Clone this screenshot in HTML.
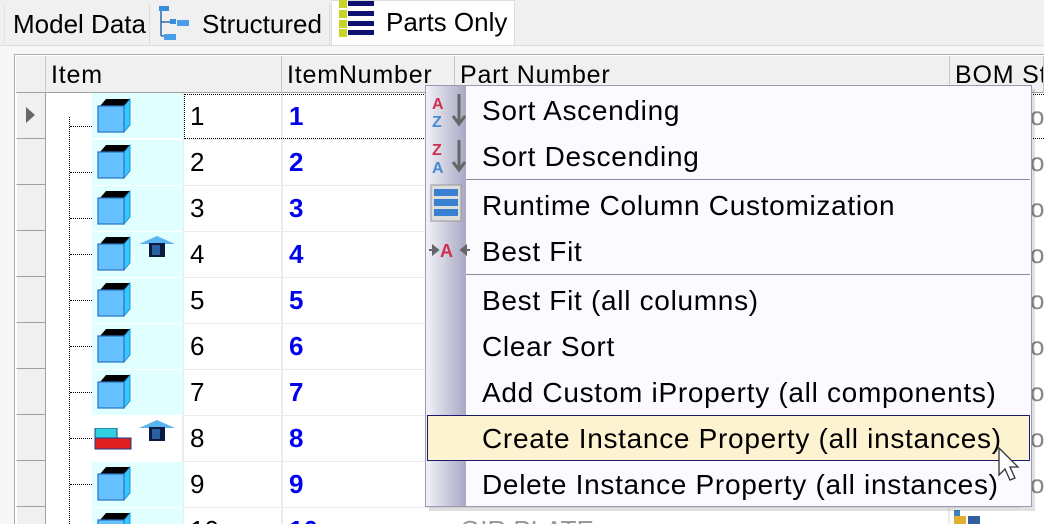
<!DOCTYPE html>
<html><head><meta charset="utf-8"><style>
*{margin:0;padding:0;box-sizing:border-box}
html{width:1044px;height:524px;overflow:hidden}
body{width:1044px;height:524px;overflow:hidden;background:#f0f0f0;font-family:"Liberation Sans","DejaVu Sans",sans-serif;position:relative}
.a{position:absolute}
.tab{position:absolute;top:4px;height:41px;font-size:26px;line-height:41px;color:#000;border-right:1px solid #ddd;white-space:nowrap}
.hdr{position:absolute;top:56px;height:37px;background:#f0f0f0;border-right:1px solid #c8c8c8;border-bottom:1px solid #a0a0a0;font-size:25px;letter-spacing:.8px;line-height:38px;padding-left:5px;color:#000;white-space:nowrap;overflow:hidden}
.rs{position:absolute;left:16px;width:30px;height:46px;background:#f0f0f0;border-right:1px solid #a0a0a0;border-bottom:1px solid #a0a0a0;border-left:1px solid #fff}
.cy{position:absolute;left:92px;width:91px;height:45px;background:#e0ffff}
.n{position:absolute;left:190px;font-size:26px;line-height:46px;height:46px}
.b{position:absolute;left:289px;font-size:26px;font-weight:bold;color:#0000ee;line-height:46px;height:46px}
.hl{position:absolute;left:184px;width:836px;height:1px;background:#ececec}
.vl{position:absolute;width:2px;background:#ececec}
.dt{position:absolute;left:70px;width:22px;border-top:1px dotted #000}
.cube{position:absolute;left:96px;width:36px;height:36px}
.mi{position:absolute;left:482px;font-size:28px;letter-spacing:.7px;line-height:46px;height:45px;color:#000;white-space:nowrap}
.sep{position:absolute;left:466px;width:564px;height:1px;background:#8a8aa0}
.nor{position:absolute;left:1030px;font-size:26px;line-height:46px;height:46px;color:#888}
</style></head><body>
<div class="a" style="left:0;top:45px;width:1044px;height:479px;background:#f7f7f7;border-top:1px solid #ddd"></div>
<div class="tab" style="left:4px;width:146px;padding-left:8px;background:#f0f0f0;border-left:1px solid #e4e4e4">Model Data</div>
<div class="tab" style="left:150px;width:180px;padding-left:52px;background:#f0f0f0">Structured</div>
<svg class="a" style="left:157px;top:6px" width="40" height="34"><rect x="2" y="0" width="10" height="5" fill="#3a8ed8"/><path d="M4 5V30M4 16H14M4 30H8" stroke="#2a6aa8" stroke-width="1.5" fill="none"/><rect x="13" y="13" width="6" height="5" fill="#3a8ed8"/><rect x="20" y="14" width="12" height="6" fill="#4a9ee8"/><rect x="7" y="28" width="12" height="6" fill="#4a9ee8"/></svg>
<div class="tab" style="left:331px;top:0;height:45px;line-height:42px;width:184px;padding-left:54px;background:#fff;border:1px solid #ddd;border-bottom:none">Parts Only</div>
<svg class="a" style="left:338px;top:0" width="42" height="38"><g fill="#c8d428"><rect x="1" y="0" width="8" height="8"/><rect x="1" y="10" width="8" height="8"/><rect x="1" y="20" width="8" height="8"/><rect x="1" y="29" width="8" height="8"/></g><g fill="#101070"><rect x="10" y="1" width="26" height="5"/><rect x="10" y="11" width="26" height="5"/><rect x="10" y="21" width="26" height="5"/><rect x="10" y="30" width="26" height="5"/></g></svg>
<div class="a" style="left:14px;top:54px;width:1030px;height:470px;background:#fff;border:1px solid #aaa;border-right:none;border-bottom:none"></div>
<div class="hdr" style="left:16px;width:30px;padding:0"></div>
<div class="hdr" style="left:46px;width:236px">Item</div>
<div class="hdr" style="left:282px;width:173px">ItemNumber</div>
<div class="hdr" style="left:455px;width:495px">Part Number</div>
<div class="hdr" style="left:950px;width:94px">BOM Str</div>
<div class="a" style="left:69px;top:117px;height:407px;border-left:1px dotted #000"></div>
<div class="rs" style="top:93px"></div><div class="a" style="left:26px;top:107px;border-left:9px solid #666;border-top:8px solid transparent;border-bottom:8px solid transparent"></div>
<div class="rs" style="top:139px"></div><div class="rs" style="top:185px"></div><div class="rs" style="top:231px"></div><div class="rs" style="top:277px"></div><div class="rs" style="top:323px"></div><div class="rs" style="top:369px"></div><div class="rs" style="top:415px"></div><div class="rs" style="top:461px"></div><div class="rs" style="top:507px;height:17px;border-bottom:none"></div>
<div class="vl" style="left:182px;top:93px;height:431px"></div><div class="vl" style="left:281px;top:93px;height:431px"></div><div class="vl" style="left:948px;top:93px;height:431px"></div>
<div class="hl" style="top:139px"></div><div class="hl" style="top:185px"></div><div class="hl" style="top:231px"></div><div class="hl" style="top:277px"></div><div class="hl" style="top:323px"></div><div class="hl" style="top:369px"></div><div class="hl" style="top:415px"></div><div class="hl" style="top:461px"></div><div class="hl" style="top:507px"></div>
<div class="a" style="left:184px;top:94px;width:860px;height:45px;border:1px dotted #000;border-right:none"></div>
<div class="cy" style="top:93px"></div><div class="cy" style="top:140px"></div><div class="cy" style="top:186px"></div><div class="cy" style="top:232px"></div><div class="cy" style="top:278px"></div><div class="cy" style="top:324px"></div><div class="cy" style="top:370px"></div><div class="cy" style="top:462px"></div><div class="cy" style="top:508px;height:16px"></div>
<svg width="0" height="0" style="position:absolute"><defs><g id="c"><path d="M4 9L10 2H34L28 9Z" fill="#000"/><path d="M28 9L34 2V28L28 35Z" fill="#33c8ff" stroke="#2080c0" stroke-width=".8"/><rect x="2" y="9" width="26" height="26" fill="#66c2ff" stroke="#2a70c8" stroke-width="1.2"/></g><g id="h"><path d="M2 12L20 4L38 12Z" fill="#5ab4f0"/><rect x="12" y="11" width="16" height="14" fill="#0a1a40"/><rect x="15" y="13" width="8" height="10" fill="#2a60a0"/></g></defs></svg>
<svg class="cube" style="top:97px"><use href="#c"/></svg>
<svg class="cube" style="top:143px"><use href="#c"/></svg>
<svg class="cube" style="top:189px"><use href="#c"/></svg>
<svg class="cube" style="top:235px"><use href="#c"/></svg>
<svg class="cube" style="top:281px"><use href="#c"/></svg>
<svg class="cube" style="top:327px"><use href="#c"/></svg>
<svg class="cube" style="top:373px"><use href="#c"/></svg>
<svg class="cube" style="top:465px"><use href="#c"/></svg>
<svg class="cube" style="top:511px;height:13px"><use href="#c"/></svg>
<svg class="a" style="left:137px;top:232px" width="40" height="28"><use href="#h"/></svg>
<svg class="a" style="left:137px;top:416px" width="40" height="28"><use href="#h"/></svg>
<svg class="a" style="left:94px;top:428px" width="38" height="24"><rect x="1" y="0" width="22" height="10" fill="#30d0e0" stroke="#1a4a80"/><rect x="1" y="10" width="36" height="11" fill="#e02020" stroke="#1a3a80"/></svg>
<div class="dt" style="top:126px"></div><div class="dt" style="top:172px"></div><div class="dt" style="top:218px"></div><div class="dt" style="top:254px"></div><div class="dt" style="top:300px"></div><div class="dt" style="top:346px"></div><div class="dt" style="top:392px"></div><div class="dt" style="top:438px"></div><div class="dt" style="top:484px"></div>
<div class="n" style="top:93px">1</div><div class="n" style="top:139px">2</div><div class="n" style="top:185px">3</div><div class="n" style="top:231px">4</div><div class="n" style="top:277px">5</div><div class="n" style="top:323px">6</div><div class="n" style="top:369px">7</div><div class="n" style="top:415px">8</div><div class="n" style="top:461px">9</div><div class="n" style="top:507px;height:17px;overflow:hidden">10</div>
<div class="b" style="top:93px">1</div><div class="b" style="top:139px">2</div><div class="b" style="top:185px">3</div><div class="b" style="top:231px">4</div><div class="b" style="top:277px">5</div><div class="b" style="top:323px">6</div><div class="b" style="top:369px">7</div><div class="b" style="top:415px">8</div><div class="b" style="top:461px">9</div><div class="b" style="top:507px;height:17px;overflow:hidden">10</div>
<div class="a" style="left:460px;top:507px;font-size:26px;line-height:46px;height:17px;overflow:hidden;color:#999">GIR PLATE</div>
<div class="nor" style="top:93px">or</div><div class="nor" style="top:139px">or</div><div class="nor" style="top:185px">or</div><div class="nor" style="top:231px">or</div><div class="nor" style="top:277px">or</div><div class="nor" style="top:323px">or</div><div class="nor" style="top:369px">or</div><div class="nor" style="top:415px">or</div><div class="nor" style="top:461px;height:46px;max-height:46px">or</div>
<svg class="a" style="left:952px;top:510px" width="40" height="14"><rect x="2" y="0" width="6" height="6" fill="#4080c0"/><rect x="2" y="6" width="12" height="8" fill="#e0b030"/><rect x="16" y="6" width="12" height="8" fill="#3060a0"/></svg>
<div class="a" style="left:429px;top:89px;width:606px;height:422px;background:rgba(0,0,0,.12)"></div>
<div class="a" style="left:425px;top:85px;width:607px;height:422px;background:#fbfaff;border:1px solid #9a9ab0"></div>
<div class="a" style="left:426px;top:86px;width:40px;height:420px;background:linear-gradient(90deg,#f2f2f8,#a8a8c4)"></div>
<div class="sep" style="top:179px"></div><div class="sep" style="top:274px"></div>
<div class="a" style="left:427px;top:415px;width:603px;height:46px;background:#fdf3d0;border:1px solid #1a1a70"></div>
<div class="mi" style="top:88px">Sort Ascending</div>
<div class="mi" style="top:134px">Sort Descending</div>
<div class="mi" style="top:183px">Runtime Column Customization</div>
<div class="mi" style="top:229px">Best Fit</div>
<div class="mi" style="top:278px">Best Fit (all columns)</div>
<div class="mi" style="top:324px">Clear Sort</div>
<div class="mi" style="top:370px">Add Custom iProperty (all components)</div>
<div class="mi" style="top:416px">Create Instance Property (all instances)</div>
<div class="mi" style="top:462px">Delete Instance Property (all instances)</div>
<svg class="a" style="left:430px;top:92px" width="40" height="40"><text x="2" y="17" font-family="Liberation Sans" font-weight="bold" font-size="16" fill="#d03050">A</text><text x="2" y="35" font-family="Liberation Sans" font-weight="bold" font-size="16" fill="#4a8ad0">Z</text><path d="M29 2V30M23 24L29 32L35 24" stroke="#666" stroke-width="3" fill="none"/></svg>
<svg class="a" style="left:430px;top:138px" width="40" height="40"><text x="2" y="17" font-family="Liberation Sans" font-weight="bold" font-size="16" fill="#d03050">Z</text><text x="2" y="35" font-family="Liberation Sans" font-weight="bold" font-size="16" fill="#4a8ad0">A</text><path d="M29 2V30M23 24L29 32L35 24" stroke="#666" stroke-width="3" fill="none"/></svg>
<svg class="a" style="left:430px;top:184px" width="40" height="40"><rect x="1" y="1" width="30" height="36" fill="#ddd" stroke="#999"/><rect x="4" y="5" width="24" height="7" fill="#3a80d0"/><rect x="4" y="15" width="24" height="7" fill="#3a80d0"/><rect x="4" y="25" width="24" height="7" fill="#3a80d0"/></svg>
<svg class="a" style="left:428px;top:240px" width="44" height="20"><path d="M1 10H8M5 6L10 10L5 14Z" stroke="#666" stroke-width="2" fill="#666"/><text x="12" y="17" font-family="Liberation Sans" font-weight="bold" font-size="18" fill="#d03050">A</text><path d="M42 10H35M38 6L33 10L38 14Z" stroke="#666" stroke-width="2" fill="#666"/></svg>
<svg class="a" style="left:997px;top:447px" width="34" height="40"><path d="M2 1V28L8 22L13 33L18 31L13 20H21Z" fill="#fff" stroke="#333" stroke-width="1.3"/></svg>
</body></html>
